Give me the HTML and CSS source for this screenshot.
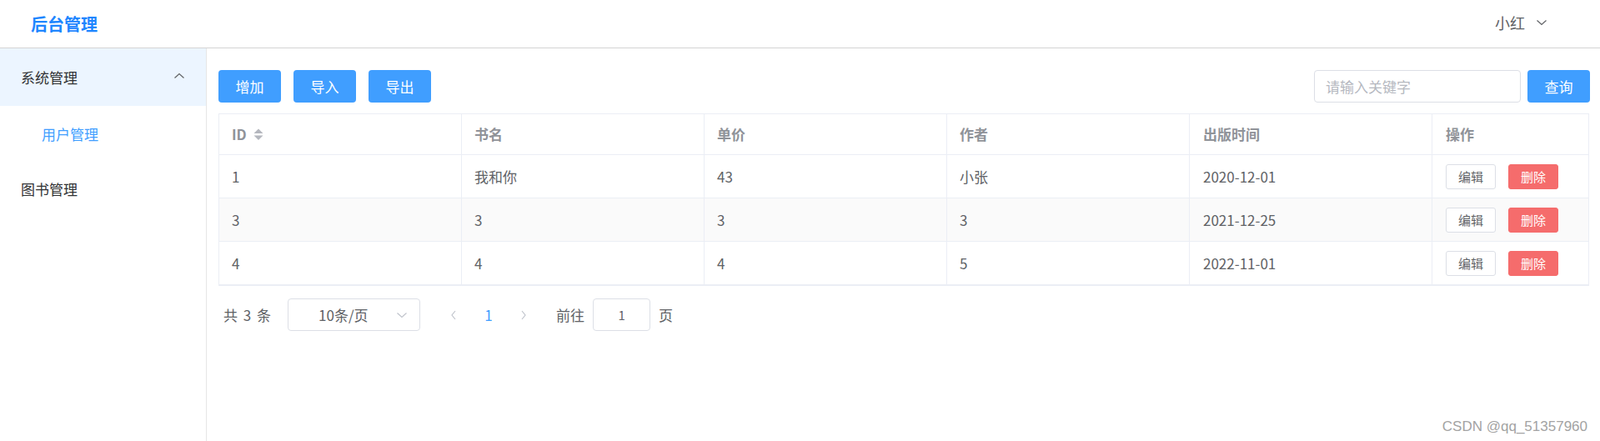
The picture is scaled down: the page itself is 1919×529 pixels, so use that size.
FILE: index.html
```html
<!DOCTYPE html>
<html lang="zh-CN">
<head>
<meta charset="utf-8">
<title>后台管理</title>
<link rel="stylesheet" href="styles.css">
</head>
<body>
<div class="app">
  <header class="topbar">
    <div class="brand">后台管理</div>
    <div class="user">
      <span class="user-name">小红</span>
      <svg class="user-caret" width="14" height="10" viewBox="0 0 14 10"><polyline points="1.5,2.5 7,7.5 12.5,2.5" fill="none" stroke="#606266" stroke-width="1.2"/></svg>
    </div>
  </header>
  <div class="body">
    <aside class="sidebar">
      <div class="menu-title active-group">
        <span>系统管理</span>
        <svg class="menu-arrow" width="14" height="10" viewBox="0 0 14 10"><polyline points="1.5,7.5 7,2.5 12.5,7.5" fill="none" stroke="#606266" stroke-width="1.2"/></svg>
      </div>
      <div class="menu-item sub active">用户管理</div>
      <div class="menu-item">图书管理</div>
    </aside>
    <main class="main">
      <div class="toolbar">
        <div class="btn-group">
          <button class="btn btn-primary">增加</button>
          <button class="btn btn-primary">导入</button>
          <button class="btn btn-primary">导出</button>
        </div>
        <div class="search">
          <input class="search-input" type="text" placeholder="请输入关键字">
          <button class="btn btn-primary">查询</button>
        </div>
      </div>
      <table class="grid">
        <colgroup>
          <col class="c"><col class="c"><col class="c"><col class="c"><col class="c"><col>
        </colgroup>
        <thead>
          <tr>
            <th><span class="th-inner">ID
              <svg class="sort" width="12" height="15" viewBox="0 0 12 15"><polygon points="6,0.5 11.5,6 0.5,6" fill="#b4b7be"/><polygon points="0.5,8.5 11.5,8.5 6,14" fill="#b4b7be"/></svg></span></th>
            <th>书名</th>
            <th>单价</th>
            <th>作者</th>
            <th>出版时间</th>
            <th>操作</th>
          </tr>
        </thead>
        <tbody>
          <tr>
            <td>1</td><td>我和你</td><td>43</td><td>小张</td><td>2020-12-01</td>
            <td><span class="ops"><button class="mini">编辑</button><button class="mini danger">删除</button></span></td>
          </tr>
          <tr class="striped">
            <td>3</td><td>3</td><td>3</td><td>3</td><td>2021-12-25</td>
            <td><span class="ops"><button class="mini">编辑</button><button class="mini danger">删除</button></span></td>
          </tr>
          <tr>
            <td>4</td><td>4</td><td>4</td><td>5</td><td>2022-11-01</td>
            <td><span class="ops"><button class="mini">编辑</button><button class="mini danger">删除</button></span></td>
          </tr>
        </tbody>
      </table>
      <div class="pager">
        <span class="total">共 3 条</span>
        <div class="size-select">
          <span>10条/页</span>
          <svg class="select-caret" width="14" height="10" viewBox="0 0 14 10"><polyline points="1.5,2.5 7,7.5 12.5,2.5" fill="none" stroke="#c0c4cc" stroke-width="1.2"/></svg>
        </div>
        <span class="nav-btn"><svg width="10" height="14" viewBox="0 0 10 14"><polyline points="7,2 3,7 7,12" fill="none" stroke="#c0c4cc" stroke-width="1.2"/></svg></span>
        <span class="page-num">1</span>
        <span class="nav-btn"><svg width="10" height="14" viewBox="0 0 10 14"><polyline points="3,2 7,7 3,12" fill="none" stroke="#c0c4cc" stroke-width="1.2"/></svg></span>
        <span class="jump">前往</span>
        <div class="jump-input">1</div>
        <span class="jump-suffix">页</span>
      </div>
    </main>
  </div>
  <div class="watermark">CSDN @qq_51357960</div>
</div>
</body>
</html>
```

FILE: styles.css
```css
* { box-sizing: border-box; }
html, body { margin: 0; padding: 0; }
body {
  width: 1919px;
  height: 529px;
  overflow: hidden;
  background: #fff;
  font-family: "Noto Sans CJK SC", "Noto Sans", sans-serif;
  color: #606266;
}
.app { position: relative; height: 529px; display: flex; flex-direction: column; }

.topbar {
  height: 58px;
  flex: none;
  border-bottom: 1px solid #d4d4d4;
  display: flex;
  align-items: center;
  justify-content: space-between;
  padding: 0 63px 0 37px;
}
.brand { font-size: 20px; font-weight: 700; color: #1e86ff; line-height: 24px; margin-top: 1px; }
.user { display: flex; align-items: center; gap: 13px; margin-top: -4px; }
.user-name { font-size: 18px; color: #606266; line-height: 24px; }
.user-caret { display: block; }

.body { flex: 1; display: flex; min-height: 0; }
.sidebar {
  width: 248px;
  flex: none;
  border-right: 1px solid #e6e6e6;
  background: #fff;
}
.menu-title, .menu-item {
  height: 66px;
  display: flex;
  align-items: center;
  font-size: 17px;
  color: #303133;
  padding-left: 25px;
}
.menu-title { height: 69px; justify-content: space-between; padding-right: 25px; }
.active-group { background: #ecf5ff; }
.menu-arrow { display: block; margin-top: -4px; }
.menu-item.sub { padding-left: 50px; }
.menu-item.active { color: #409eff; }

.main { flex: 1; padding: 26px 13px 0 14px; min-width: 0; }
.toolbar { display: flex; justify-content: space-between; align-items: center; height: 39px; }
.btn-group { display: flex; gap: 15px; }
.btn {
  height: 39px;
  width: 75px;
  border: 0;
  border-radius: 4px;
  font-family: inherit;
  font-size: 17px;
  padding: 0;
  cursor: pointer;
}
.btn-primary { background: #409eff; color: #fff; }
.search { display: flex; gap: 8px; margin-right: -1px; }
.search-input {
  width: 248px;
  height: 39px;
  border: 1px solid #dcdfe6;
  border-radius: 4px;
  padding: 0 13px;
  font-family: inherit;
  font-size: 17px;
  color: #606266;
  outline: none;
}
.search-input::placeholder { color: #b5b8bf; }

.grid {
  width: 1644px;
  margin-top: 13px;
  table-layout: fixed;
  border-collapse: separate;
  border-spacing: 0;
  border-top: 1px solid #ebeef5;
  border-left: 1px solid #ebeef5;
  border-bottom: 1px solid #ebeef5;
}
.grid col.c { width: 291px; }
.grid th, .grid td {
  border-right: 1px solid #ebeef5;
  border-bottom: 1px solid #ebeef5;
  text-align: left;
  padding: 0 0 0 15px;
  font-size: 17px;
  line-height: 22px;
}
.grid th { height: 49px; color: #909399; font-weight: 700; }
.grid td { height: 52px; color: #606266; }
.grid td:nth-child(5), .grid th:nth-child(5) { padding-left: 16px; }
.grid td:last-child, .grid th:last-child { padding-left: 16px; }
.grid tr.striped td { background: #fafafa; }
.th-inner { display: inline-flex; align-items: center; gap: 8px; }
.sort { display: block; }
.ops { display: flex; gap: 15px; }
.mini {
  width: 60px;
  height: 30px;
  border: 1px solid #dcdfe6;
  border-radius: 3px;
  background: #fff;
  color: #606266;
  font-family: inherit;
  font-size: 15px;
  padding: 0;
}
.mini.danger { background: #f56c6c; border-color: #f56c6c; color: #fff; }

.pager { display: flex; align-items: center; margin-top: 15px; height: 39px; padding-left: 6px; }
.total { font-size: 17px; color: #606266; margin-right: 20px; word-spacing: 3px; }
.size-select {
  width: 159px;
  height: 39px;
  border: 1px solid #dcdfe6;
  border-radius: 4px;
  display: flex;
  align-items: center;
  font-size: 17px;
  color: #606266;
  padding-left: 36px;
  position: relative;
}
.select-caret { position: absolute; right: 14px; top: 14px; }
.nav-btn { width: 36px; display: flex; justify-content: center; margin-left: 0; }
.size-select + .nav-btn { margin-left: 22px; }
.page-num { width: 48px; text-align: center; font-size: 17px; color: #409eff; }
.jump { font-size: 17px; color: #606266; margin-left: 21px; margin-right: 10px; }
.jump-input {
  width: 69px;
  height: 39px;
  border: 1px solid #dcdfe6;
  border-radius: 4px;
  display: flex;
  align-items: center;
  justify-content: center;
  font-size: 15px;
  color: #606266;
}
.jump-suffix { font-size: 17px; color: #606266; margin-left: 10px; }

.watermark {
  position: absolute;
  right: 15px;
  bottom: 7px;
  font-family: "Liberation Sans", Arial, sans-serif;
  font-size: 17px;
  color: #a3a3a3;
}
```
